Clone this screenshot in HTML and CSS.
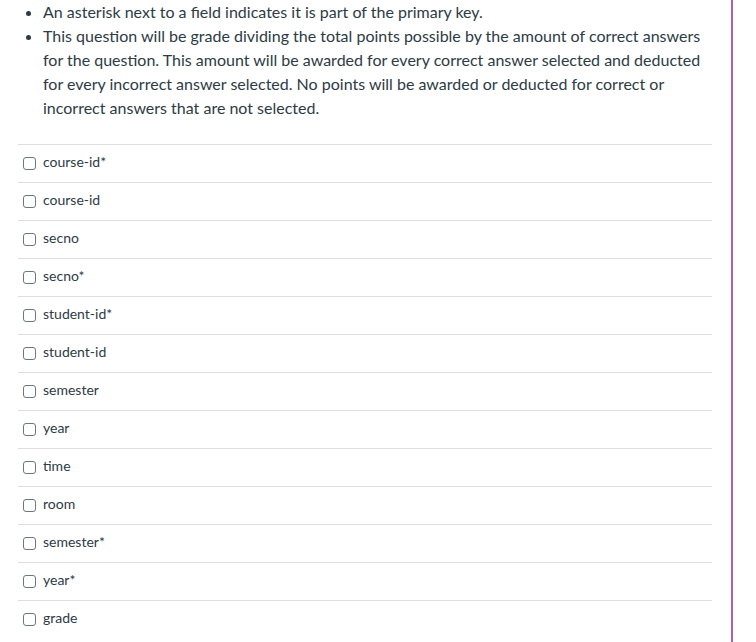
FILE: index.html
```html
<!DOCTYPE html>
<html>
<head>
<meta charset="utf-8">
<link rel="stylesheet" href="styles.css">
</head>
<body>
<div class="page">
  <div class="content">
    <ul class="notes">
      <li>An asterisk next to a field indicates it is part of the primary key.</li>
      <li>This question will be grade dividing the total points possible by the amount of correct answers for the question. This amount will be awarded for every correct answer selected and deducted for every incorrect answer selected. No points will be awarded or deducted for correct or incorrect answers that are not selected.</li>
    </ul>
    <div class="answers">
      <label class="answer"><span class="box"></span><span class="label">course-id*</span></label>
      <label class="answer"><span class="box"></span><span class="label">course-id</span></label>
      <label class="answer"><span class="box"></span><span class="label">secno</span></label>
      <label class="answer"><span class="box"></span><span class="label">secno*</span></label>
      <label class="answer"><span class="box"></span><span class="label">student-id*</span></label>
      <label class="answer"><span class="box"></span><span class="label">student-id</span></label>
      <label class="answer"><span class="box"></span><span class="label">semester</span></label>
      <label class="answer"><span class="box"></span><span class="label">year</span></label>
      <label class="answer"><span class="box"></span><span class="label">time</span></label>
      <label class="answer"><span class="box"></span><span class="label">room</span></label>
      <label class="answer"><span class="box"></span><span class="label">semester*</span></label>
      <label class="answer"><span class="box"></span><span class="label">year*</span></label>
      <label class="answer"><span class="box"></span><span class="label">grade</span></label>
    </div>
  </div>
</div>
</body>
</html>
```
FILE: styles.css
```css
html, body {
  margin: 0;
  padding: 0;
  background: #fff;
}
body {
  font-family: Lato, "Open Sans", sans-serif;
  color: #2d3b45;
  overflow: hidden;
}
.page {
  display: flex;
  height: 642px;
}
.content {
  width: 694px;
  padding: 0 19px 0 18px;
  border-right: 2px solid #b55cb8;
}
.notes {
  margin: 0 0 24px 0;
  padding-left: 25px;
  font-size: 16px;
  line-height: 24px;
}
.answers {
  display: flex;
  flex-direction: column;
}
.answer {
  display: flex;
  align-items: center;
  height: 37px;
  border-top: 1px solid #dedede;
  font-size: 14px;
  padding-left: 5px;
}
.label {
  padding-bottom: 5px;
}
.box {
  box-sizing: border-box;
  width: 13px;
  height: 13px;
  border: 1px solid #6b7780;
  border-radius: 3px;
  margin-right: 7px;
  flex: none;
}
```
